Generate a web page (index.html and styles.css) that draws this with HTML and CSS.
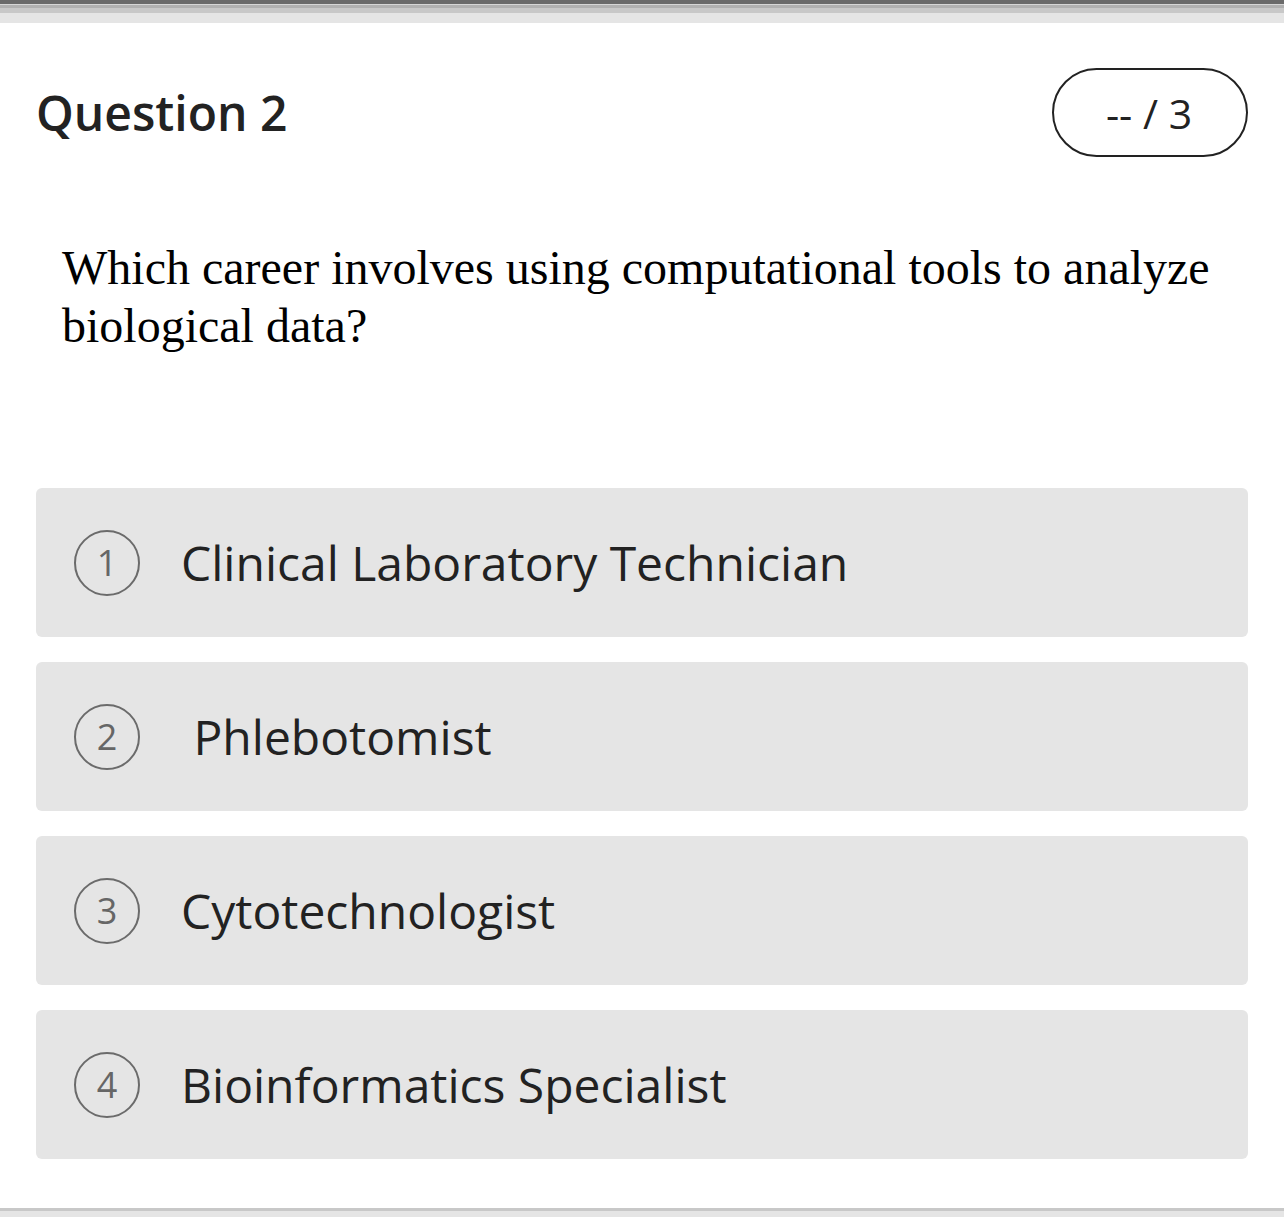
FILE: index.html
```html
<!DOCTYPE html>
<html lang="en">
<head>
    <meta charset="UTF-8">
    <meta name="viewport" content="width=device-width, initial-scale=1.0">
    <title>Question 2</title>
    <link rel="stylesheet" href="styles.css">
</head>
<body>

    <div class="topbar"></div>

    <div class="container">
        <div class="question-head">
            <h2>Question 2</h2>
            <div class="score">-- / 3</div>
        </div>

        <p class="question-text">Which career involves using computational tools to analyze biological data?</p>

        <div class="options">
            <div class="option">
                <span class="num">1</span>
                <span class="label">Clinical Laboratory Technician</span>
            </div>
            <div class="option">
                <span class="num">2</span>
                <span class="label">&nbsp;Phlebotomist</span>
            </div>
            <div class="option">
                <span class="num">3</span>
                <span class="label">Cytotechnologist</span>
            </div>
            <div class="option">
                <span class="num">4</span>
                <span class="label">Bioinformatics Specialist</span>
            </div>
        </div>
    </div>

    <div class="bottombar"></div>

</body>
</html>
```

FILE: styles.css
```css
body {
    font-family: "Open Sans", sans-serif;
    background-color: #fff;
    color: #222;
    margin: 0;
    padding: 0;
}
.topbar {
    height: 23px;
    background: linear-gradient(to bottom,
        #6a6a6a 0, #6a6a6a 4px,
        #d6d6d6 4px, #d6d6d6 5px,
        #b0b0b0 5px, #b0b0b0 8px,
        #c8c8c8 8px, #c8c8c8 13px,
        #e5e5e5 13px, #e5e5e5 23px);
}
.container {
    padding: 45px 36px 0;
    height: 1185px;
    box-sizing: border-box;
}
.question-head {
    display: flex;
    justify-content: space-between;
    align-items: center;
}
.question-head h2 {
    margin: 0;
    font-size: 48px;
    font-weight: 600;
}
.score {
    width: 196px;
    height: 89px;
    box-sizing: border-box;
    border: 2.5px solid #222;
    border-radius: 45px;
    display: flex;
    align-items: center;
    justify-content: center;
    font-size: 41px;
    padding-right: 2px;
}
.question-text {
    font-family: "Liberation Serif", "Times New Roman", serif;
    font-size: 48px;
    line-height: 58px;
    margin: 82px 0 0;
    padding: 0 26px;
    color: #000;
}
.options {
    margin-top: 133px;
    display: flex;
    flex-direction: column;
    gap: 25px;
}
.option {
    height: 149px;
    background: #e5e5e5;
    border-radius: 6px;
    display: flex;
    align-items: center;
    padding-left: 38px;
}
.num {
    width: 66px;
    height: 66px;
    box-sizing: border-box;
    border: 2.5px solid #6b6b6b;
    border-radius: 50%;
    color: #666;
    font-size: 36px;
    display: flex;
    align-items: center;
    justify-content: center;
    flex-shrink: 0;
}
.label {
    margin-left: 41px;
    font-size: 48px;
    color: #222;
}
.bottombar {
    height: 9px;
    background: linear-gradient(to bottom,
        #c8c8c8 0, #c8c8c8 3px,
        #e5e5e5 3px, #e5e5e5 9px);
}
```
